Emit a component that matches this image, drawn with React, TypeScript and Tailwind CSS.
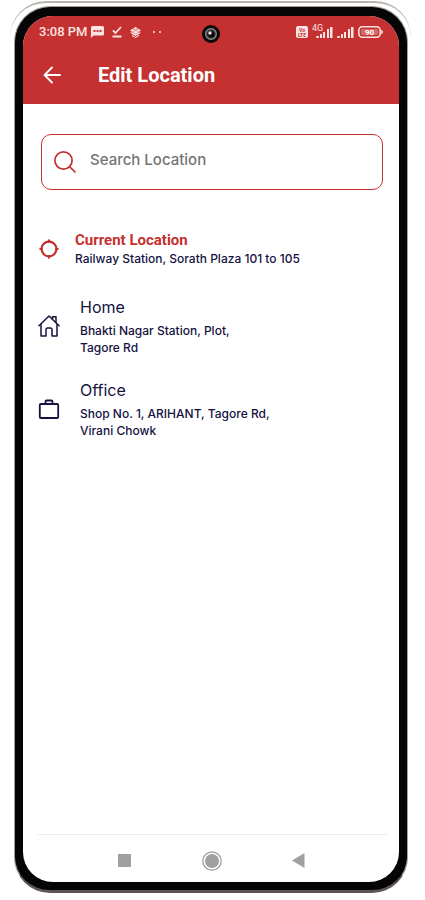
import React from 'react';

type Place = {
  title: string;
  lines: string[];
  icon: React.ReactNode;
};

const ChatIcon = () => (
  <svg width="13" height="12" viewBox="0 0 13 12" aria-hidden="true">
    <path d="M1.5 0h10A1.5 1.5 0 0 1 13 1.500v6.500a1.500 1.500 0 0 1-1.500 1.500H2.500L0 12V1.500A1.500 1.500 0 0 1 1.500 0z" fill="#fbe3e3" />
    <path d="M2.500 4h2v2h-2zM5.500 4h2v2h-2zM8.500 4h2v2h-2z" fill="#c53030" />
  </svg>
);

const CheckIcon = () => (
  <svg width="10" height="12" viewBox="0 0 10 12" fill="none" stroke="#fbe3e3" strokeWidth="1.800" aria-hidden="true">
    <path d="M1 4.500l2.500 2.500L9 1M.5 10.500h9" />
  </svg>
);

const StackIcon = () => (
  <svg width="11" height="11" viewBox="0 0 11 11" fill="#fbe3e3" aria-hidden="true">
    <path d="M5.500 0L8 1.500 5.500 3 3 1.500zM2.500 1.700L5.200 3.400 2.600 5.100 0 3.400zM8.500 1.700L11 3.400 8.400 5.100 5.800 3.400zM5.500 3.600L8.200 5.300 5.500 7 2.800 5.300z" />
    <path d="M0 5.700l2.400-.4 3.100 2 3.100-2 2.400.4-5.500 3.400zM2 7.800l3.500 2.100L9 7.800v1.200l-3.500 2L2 9z" />
  </svg>
);

const VolteIcon = () => (
  <svg width="12" height="12" viewBox="0 0 12 12" aria-hidden="true">
    <rect width="12" height="12" rx="2" fill="#fbe3e3" />
    <text x="6" y="5.500" fontFamily="Roboto, sans-serif" fontSize="5" fontWeight="700" textAnchor="middle" fill="#c53030">Vo</text>
    <text x="6" y="10.500" fontFamily="Roboto, sans-serif" fontSize="5" fontWeight="700" textAnchor="middle" fill="#c53030">LTE</text>
  </svg>
);

const SignalIcon = () => (
  <svg width="17" height="12" viewBox="0 0 17 12" fill="#fbe3e3" aria-hidden="true">
    <rect x="0" y="10" width="3" height="2" rx="1" />
    <rect x="4" y="8" width="2" height="4" />
    <rect x="7" y="6" width="2" height="6" />
    <rect x="11" y="3" width="2" height="9" />
    <rect x="14" y="1" width="2.500" height="11" />
  </svg>
);

const BatteryIcon = () => (
  <svg width="25" height="12" viewBox="0 0 25 12" aria-hidden="true">
    <rect x=".8" y=".8" width="21.400" height="10.400" rx="3.500" fill="none" stroke="#fbe3e3" strokeWidth="1.600" />
    <rect x="3" y="3" width="17" height="6" rx="1" fill="#d66a6a" />
    <path d="M23.200 4a1.800 2 0 0 1 0 4z" fill="#fbe3e3" />
    <text x="11.500" y="9" fontFamily="Roboto, sans-serif" fontSize="8" fontWeight="700" textAnchor="middle" fill="#fff">90</text>
  </svg>
);

const CameraLens = () => (
  <svg width="18" height="18" viewBox="0 0 18 18" aria-hidden="true">
    <circle cx="9" cy="9" r="9" fill="#0a0a0a" />
    <circle cx="9" cy="9" r="5.300" fill="#2a2a2a" stroke="#8b8b8b" strokeWidth="1.400" />
    <circle cx="9.500" cy="9.500" r="2.800" fill="#080808" />
    <circle cx="8" cy="8" r="1.700" fill="#e5e5e5" />
  </svg>
);

const BackIcon = () => (
  <svg width="18" height="18" viewBox="0 0 18 18" fill="none" stroke="#fff" strokeWidth="1.800" strokeLinecap="round" strokeLinejoin="round" aria-hidden="true">
    <path d="M17 9H1.500M9 1.500L1.500 9 9 16.500" />
  </svg>
);

const SearchIcon = () => (
  <svg className="shrink-0" width="22" height="22" viewBox="0 0 22 22" fill="none" stroke="#c53030" strokeWidth="1.700" strokeLinecap="round" aria-hidden="true">
    <circle cx="9.500" cy="9.500" r="8.600" />
    <path d="M15.500 15.700L21 21" />
  </svg>
);

const TargetIcon = () => (
  <svg width="20" height="20" viewBox="0 0 20 20" fill="none" stroke="#c53030" strokeWidth="2.200" strokeLinecap="round" aria-hidden="true">
    <circle cx="10" cy="10" r="7.400" />
    <path d="M10 1.300v1.500M10 17.200v1.500M1.300 10h1.500M17.200 10h1.500" />
  </svg>
);

const HomeIcon = () => (
  <svg width="22" height="22" viewBox="0 0 22 22" fill="none" stroke="#15123f" strokeWidth="1.500" strokeLinecap="round" strokeLinejoin="round" aria-hidden="true">
    <path d="M1 10.800L11 1l10 9.800" />
    <path d="M3 9.500V21h5v-6.500a1.500 1.500 0 0 1 1.500-1.500h3a1.500 1.500 0 0 1 1.500 1.500V21h5V9.500" />
    <path d="M14.500 4V1.800h3.500v5.500" />
  </svg>
);

const OfficeIcon = () => (
  <svg width="22" height="20" viewBox="0 0 22 20" fill="none" stroke="#15123f" strokeWidth="1.800" strokeLinejoin="round" aria-hidden="true">
    <rect x="1.800" y="5" width="18.400" height="14" rx="1" />
    <path d="M7.500 5V2.500a1 1 0 0 1 1-1h5a1 1 0 0 1 1 1V5" />
  </svg>
);

const places: Place[] = [
  { title: 'Home', lines: ['Bhakti Nagar Station, Plot,', 'Tagore Rd'], icon: <HomeIcon /> },
  { title: 'Office', lines: ['Shop No. 1, ARIHANT, Tagore Rd,', 'Virani Chowk'], icon: <OfficeIcon /> },
];

const StatusBar = () => (
  <div className="relative flex h-8 items-center justify-between px-4 font-[Roboto,sans-serif] text-[#fbe3e3]">
    <div className="flex items-center">
      <span className="w-[52px] text-[13px] font-medium">3:08 PM</span>
      <ChatIcon />
      <span className="ml-2"><CheckIcon /></span>
      <span className="ml-2"><StackIcon /></span>
      <span className="ml-3 flex gap-1">
        <i className="size-[2px] rounded-full bg-[#fbe3e3]" />
        <i className="size-[2px] rounded-full bg-[#fbe3e3]" />
      </span>
    </div>
    <div className="absolute top-[9px] left-1/2 -translate-x-1/2">
      <CameraLens />
    </div>
    <div className="flex items-center">
      <VolteIcon />
      <div className="relative ml-2">
        <span className="absolute -top-1 -left-1 text-[9px] leading-3">4G</span>
        <SignalIcon />
      </div>
      <span className="ml-1"><SignalIcon /></span>
      <span className="ml-1"><BatteryIcon /></span>
    </div>
  </div>
);

const PlaceRow = ({ title, lines, icon }: Place) => (
  <button type="button" className="flex w-full items-center gap-5 text-left text-[#15123f]">
    <span className="flex w-[22px] shrink-0 justify-center">{icon}</span>
    <span className="block">
      <span className="block text-base leading-6">{title}</span>
      <span className="mt-[3px] block text-xs leading-[17px] font-medium">
        {lines.map((line) => (
          <span key={line} className="block">{line}</span>
        ))}
      </span>
    </span>
  </button>
);

export default function App() {
  return (
    <div className="relative flex min-h-screen flex-col bg-white pt-[6px] pr-[17px] pb-[7px] pl-[14px] font-[Inter,sans-serif]">
      {/* outer rim of the phone */}
      <div className="absolute top-px right-[14px] left-[10px] h-9 rounded-t-[38px] border-t-2 border-[#b9b4aa]" />

      <div className="relative flex flex-1 flex-col rounded-[36px] border border-b-[3px] border-[#a5a29c] border-b-[#5c5554] bg-[#050505] px-2 pt-[9px] pb-2">
        <div className="flex flex-1 flex-col overflow-hidden rounded-[30px] bg-white">
          <header className="bg-[#c53030]">
            <StatusBar />
            <div className="flex h-14 items-center pb-[2px] pl-5">
              <button type="button" aria-label="Back" className="w-[55px]">
                <BackIcon />
              </button>
              <h1 className="font-[Roboto,sans-serif] text-xl font-bold text-white">Edit Location</h1>
            </div>
          </header>

          <main className="flex-1 pt-[30px] pr-4 pl-[15px]">
            <label className="ml-[3px] flex h-14 items-center gap-[14px] rounded-[10px] border border-[#c53030] px-3">
              <SearchIcon />
              <input
                type="text"
                aria-label="Search Location"
                placeholder="Search Location"
                className="mb-1 w-full min-w-0 bg-transparent text-[15px] font-medium outline-none placeholder:text-[#747474]"
              />
            </label>

            <button type="button" className="mt-10 flex w-full items-center gap-[15px] text-left">
              <span className="flex w-[22px] shrink-0 justify-center"><TargetIcon /></span>
              <span className="block">
                <span className="block font-[Roboto,sans-serif] text-[15px] leading-5 font-bold text-[#c53030]">Current Location</span>
                <span className="block text-xs leading-[17px] font-medium text-[#15123f]">Railway Station, Sorath Plaza 101 to 105</span>
              </span>
            </button>

            <div className="mt-7 flex flex-col gap-[22px]">
              {places.map((place) => (
                <PlaceRow key={place.title} {...place} />
              ))}
            </div>
          </main>

          <nav className="mr-3 ml-[15px] flex h-12 items-center justify-between border-t border-[#ececec] pt-1 pr-[82px] pl-[80px]">
            <button type="button" aria-label="Recent apps" className="size-[13px] bg-[#a0a0a0]" />
            <button type="button" aria-label="Home screen">
              <svg width="20" height="20" viewBox="0 0 20 20" aria-hidden="true">
                <circle cx="10" cy="10" r="9.200" fill="none" stroke="#a0a0a0" strokeWidth="1.300" />
                <circle cx="10" cy="10" r="7" fill="#a0a0a0" />
              </svg>
            </button>
            <button type="button" aria-label="Go back">
              <svg width="13" height="15" viewBox="0 0 13 15" fill="#a0a0a0" aria-hidden="true">
                <path d="M12.500 0v15L0 7.500z" />
              </svg>
            </button>
          </nav>
        </div>
      </div>
    </div>
  );
}
